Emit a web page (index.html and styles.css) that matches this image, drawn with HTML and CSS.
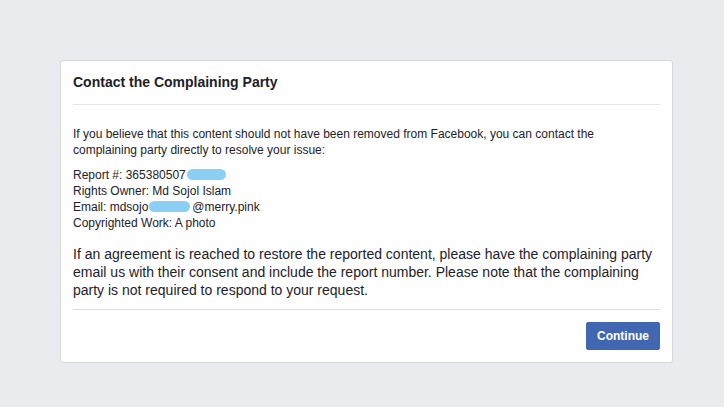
FILE: index.html
```html
<!DOCTYPE html>
<html>
<head>
<meta charset="utf-8">
<link rel="stylesheet" href="styles.css">
</head>
<body>
<div class="card">
  <div class="card-header">
    <h2 class="title">Contact the Complaining Party</h2>
  </div>
  <div class="card-body">
    <p class="intro">If you believe that this content should not have been removed from Facebook, you can contact the complaining party directly to resolve your issue:</p>
    <div class="details">
      <div>Report #: 365380507<span class="redact redact-report"></span></div>
      <div>Rights Owner: Md Sojol Islam</div>
      <div>Email: mdsojo<span class="redact redact-email"></span>@merry.pink</div>
      <div>Copyrighted Work: A photo</div>
    </div>
    <p class="note">If an agreement is reached to restore the reported content, please have the complaining party email us with their consent and include the report number. Please note that the complaining party is not required to respond to your request.</p>
  </div>
  <div class="card-footer">
    <button class="btn-primary">Continue</button>
  </div>
</div>
</body>
</html>
```
FILE: styles.css
```css
html, body {
  margin: 0;
  padding: 0;
}
body {
  background: #e9ebee;
  font-family: "Liberation Sans", Arial, Helvetica, sans-serif;
  color: #1d2129;
  width: 724px;
  height: 407px;
  overflow: hidden;
}
.card {
  margin: 60px 0 0 60px;
  width: 611px;
  background: #fff;
  border: 1px solid #d3d6db;
  border-radius: 3px;
}
.card-header {
  margin: 0 12px;
  padding: 12px 0;
  border-bottom: 1px solid #e5e5e5;
}
.title {
  margin: 0;
  font-size: 14px;
  line-height: 19px;
  font-weight: bold;
  color: #1d2129;
}
.card-body {
  margin: 0 12px;
  padding: 21px 0 10px;
  border-bottom: 1px solid #dadde1;
}
.intro {
  margin: 0;
  font-size: 12px;
  line-height: 16px;
}
.details {
  margin-top: 9px;
  font-size: 12px;
  line-height: 16px;
}
.redact {
  display: inline-block;
  vertical-align: middle;
  background: #8ccff5;
  border-radius: 6px;
  height: 11px;
  margin-top: -2px;
}
.redact-report {
  width: 39px;
  margin-left: 1px;
}
.redact-email {
  width: 41px;
  margin: -2px 2px 0 1px;
}
.note {
  margin: 14px 0 0;
  font-size: 14px;
  line-height: 18px;
}
.card-footer {
  padding: 12px;
  display: flex;
  justify-content: flex-end;
}
.btn-primary {
  height: 28px;
  padding: 0 10px;
  background: #4267b2;
  border: 1px solid #4267b2;
  border-radius: 2px;
  color: #fff;
  font-family: "Liberation Sans", Arial, Helvetica, sans-serif;
  font-size: 12px;
  font-weight: bold;
  cursor: pointer;
}
```
